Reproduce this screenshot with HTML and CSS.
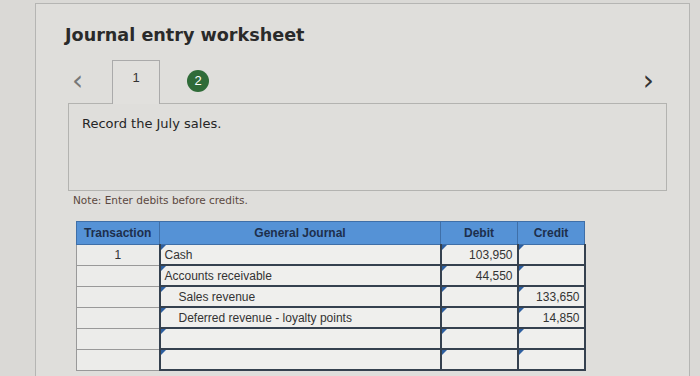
FILE: index.html
```html
<!DOCTYPE html>
<html>
<head>
    <title>Journal entry worksheet</title>
    <link rel="stylesheet" href="styles.css">
</head>
<body>
    <div class="panel">
        <h1>Journal entry worksheet</h1>
        <div class="tabs">
            <span class="arrow">&lsaquo;</span>
            <span class="tab active">1</span>
            <span class="step">2</span>
            <span class="spacer"></span>
            <span class="arrow next">&rsaquo;</span>
        </div>
        <div class="desc">Record the July sales.</div>
        <p class="note">Note: Enter debits before credits.</p>

        <table class="journal">
            <tr>
                <th class="c-tr">Transaction</th>
                <th class="c-gj">General Journal</th>
                <th class="c-dr">Debit</th>
                <th class="c-cr">Credit</th>
            </tr>
            <tr>
                <td class="c-tr">1</td>
                <td class="in">Cash</td>
                <td class="in num">103,950</td>
                <td class="in num"></td>
            </tr>
            <tr>
                <td class="c-tr"></td>
                <td class="in">Accounts receivable</td>
                <td class="in num">44,550</td>
                <td class="in num"></td>
            </tr>
            <tr>
                <td class="c-tr"></td>
                <td class="in indent">Sales revenue</td>
                <td class="in num"></td>
                <td class="in num">133,650</td>
            </tr>
            <tr>
                <td class="c-tr"></td>
                <td class="in indent">Deferred revenue - loyalty points</td>
                <td class="in num"></td>
                <td class="in num">14,850</td>
            </tr>
            <tr>
                <td class="c-tr"></td>
                <td class="in"></td>
                <td class="in num"></td>
                <td class="in num"></td>
            </tr>
            <tr>
                <td class="c-tr"></td>
                <td class="in"></td>
                <td class="in num"></td>
                <td class="in num"></td>
            </tr>
        </table>
    </div>
</body>
</html>
```

FILE: styles.css
```css
body { margin: 0; background: #dad9d6; font-family: "DejaVu Sans", Verdana, sans-serif; color: #222; overflow: hidden; }
.panel {
    margin: 3px 10px 0 35px;
    height: 373px;
    border: 1px solid #b5b5b3;
    border-bottom: none;
    padding: 0 0 0 32px;
    background: #dfdedb;
}
h1 { margin: 21px 0 0 -3px; font-size: 17.6px; font-weight: bold; color: #2a2a2a; }

.tabs { display: flex; align-items: center; height: 44px; margin-top: 14px; }
.arrow { font-size: 28px; color: #777; width: 40px; padding-left: 4px; line-height: 1; }
.arrow.next { color: #333; width: auto; margin-right: 35px; }
.tab {
    width: 48px;
    height: 44px;
    align-self: flex-end;
    border: 1px solid #aaa;
    border-bottom: none;
    box-sizing: border-box;
    text-align: center;
    font-family: "Liberation Sans", Arial, sans-serif;
    font-size: 13px;
    padding-top: 9px;
    color: #333;
    background: #e1e0dd;
    position: relative;
    top: 1px;
}
.step {
    width: 22px; height: 22px;
    margin-left: 27px;
    border-radius: 50%;
    background: #2f6b38;
    color: #fff;
    font-family: "Liberation Sans", Arial, sans-serif;
    font-size: 13px;
    text-align: center;
    line-height: 22px;
}
.spacer { flex: 1; }

.desc {
    margin: 0 22px 0 0;
    height: 88px;
    border: 1px solid #b3b3b0;
    box-sizing: border-box;
    padding: 12px 13px;
    font-size: 13px;
    color: #252525;
}
.note { margin: 3px 0 0 5px; font-size: 10.5px; color: #5b4840; }

.journal {
    margin: 15px 0 0 8px;
    border-collapse: collapse;
    font-family: "Liberation Sans", Arial, sans-serif;
    font-size: 12px;
    color: #333;
}
.journal th {
    background: #5592d6;
    color: #1d2f4c;
    font-weight: bold;
    height: 22px;
    padding: 0;
    border: 1px solid #3f6fa8;
}
.journal th.c-tr { text-align: left; padding-left: 7px; width: 75px; }
.journal th.c-gj { width: 280px; }
.journal th.c-dr { width: 76px; }
.journal th.c-cr { width: 66px; }
.journal td {
    height: 19px;
    padding: 0 4px;
    background: #ececea;
    border: 1px solid #999;
}
.journal td.c-tr { text-align: center; }
.journal td.in {
    position: relative;
    border: 2px solid #35414f;
    border-top-width: 1px;
    background: #efefed;
}
.journal td.in::before {
    content: "";
    position: absolute;
    left: 0; top: 0;
    border-top: 5px solid #2d5fa0;
    border-right: 5px solid transparent;
}
.journal td.indent { padding-left: 18px; }
.journal td.num { text-align: right; }
```
